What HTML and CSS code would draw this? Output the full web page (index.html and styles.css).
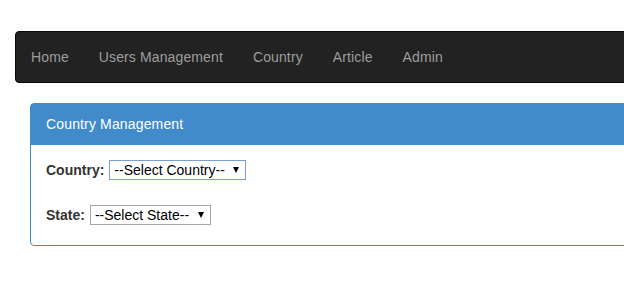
FILE: index.html
```html
<!DOCTYPE html>
<html lang="en">
<head>
  <meta charset="UTF-8" />
  <title>Country Management</title>
  <link rel="stylesheet" href="styles.css">
</head>
<body>
  <div class="page">
    <nav class="navbar">
      <a href="#">Home</a>
      <a href="#">Users Management</a>
      <a href="#">Country</a>
      <a href="#">Article</a>
      <a href="#">Admin</a>
    </nav>

    <div class="content">
      <div class="panel">
        <div class="panel-heading">Country Management</div>
        <div class="panel-body">
          <div class="form-row first">
            <label for="country">Country:</label>
            <span class="select-wrap">
              <select id="country" class="focused">
                <option>--Select Country--</option>
              </select>
              <span class="arrow"></span>
            </span>
          </div>
          <div class="form-row">
            <label for="state">State:</label>
            <span class="select-wrap">
              <select id="state">
                <option>--Select State--</option>
              </select>
              <span class="arrow"></span>
            </span>
          </div>
        </div>
      </div>
    </div>
  </div>
</body>
</html>
```

FILE: styles.css
```css
body {
  margin: 0;
  font-family: "Liberation Sans", Arial, sans-serif;
  font-size: 14px;
  color: #333;
  background: #fff;
  overflow: hidden;
}

.page {
  width: 1200px;
  padding: 31px 0 0 15px;
}

.navbar {
  display: flex;
  height: 50px;
  background-color: #222;
  border: 1px solid #080808;
  border-radius: 4px;
}

.navbar a {
  padding: 15px;
  line-height: 20px;
  color: #9d9d9d;
  letter-spacing: 0.12px;
  text-decoration: none;
}

.content {
  margin-top: 20px;
  padding-left: 15px;
}

.panel {
  border: 1px solid #428bca;
  border-radius: 4px;
  background: #fff;
}

.panel-heading {
  background-color: #428bca;
  color: #fff;
  padding: 10px 15px;
  line-height: 20px;
  letter-spacing: 0.15px;
  border-bottom: 1px solid #428bca;
}

.panel-body {
  padding: 15px 15px 20px;
}

.form-row {
  display: flex;
  align-items: center;
  gap: 5px;
  height: 20px;
}

.form-row.first {
  margin-bottom: 25px;
}

label {
  font-weight: bold;
  line-height: 20px;
}

.select-wrap {
  position: relative;
  display: inline-block;
}

select {
  appearance: none;
  -webkit-appearance: none;
  box-sizing: border-box;
  height: 20px;
  padding: 0 20px 0 4px;
  font-family: "Liberation Sans", Arial, sans-serif;
  font-size: 14px;
  line-height: 18px;
  color: #000;
  background: #fff;
  border: 1px solid #a6a6a6;
  border-radius: 0;
  outline: none;
}

select.focused {
  border-color: #7c9fd3;
}

.arrow {
  position: absolute;
  right: 7px;
  top: 7px;
  width: 0;
  height: 0;
  border-left: 3px solid transparent;
  border-right: 3px solid transparent;
  border-top: 6px solid #000;
}
```
